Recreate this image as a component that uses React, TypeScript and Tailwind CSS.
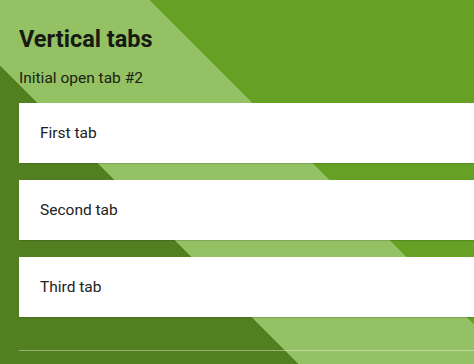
import React from "react";

const tabs = ["First tab", "Second tab", "Third tab"];

export default function App() {
  return (
    <div
      className="relative h-[364px] w-full overflow-hidden bg-[linear-gradient(45deg,#528020_211px,#93c163_211px,#93c163_363px,#66a125_363px)]"
      style={{ fontFamily: "Roboto, 'Liberation Sans', sans-serif" }}
    >
      <div className="w-[560px] pl-[19px] pt-[25px]">
        <h1 className="text-[23.5px] font-bold leading-[28px] text-[#161a12]">Vertical tabs</h1>
        <p className="mt-[13px] text-[15.5px] leading-[24px] text-[#1a2212]">Initial open tab #2</p>
        <div className="mt-[13px] flex flex-col gap-[17px]">
          {tabs.map((t) => (
            <div
              key={t}
              className="flex h-[60px] items-center bg-white px-[21px] text-[15.5px] leading-[24px] text-[#222222] shadow-[0_1px_1px_rgba(0,0,0,0.12)]"
            >
              {t}
            </div>
          ))}
        </div>
        <div className="mt-[33px] h-px bg-white/40" />
      </div>
    </div>
  );
}
